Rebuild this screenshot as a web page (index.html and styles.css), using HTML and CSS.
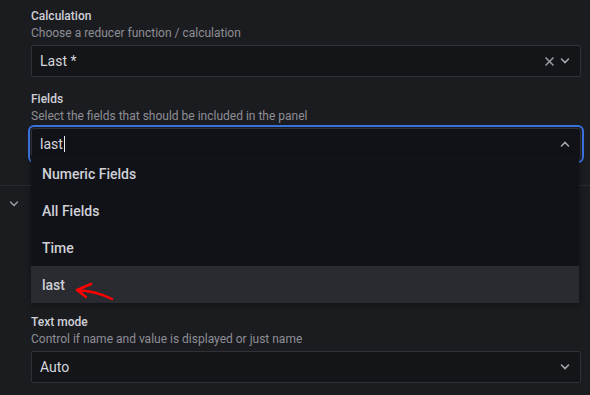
FILE: index.html
```html
<!DOCTYPE html>
<html>
<head>
<link rel="stylesheet" href="styles.css">
</head>
<body>

<div class="group">
    <div class="field">
        <div class="label">Calculation</div>
        <div class="desc">Choose a reducer function / calculation</div>
        <div class="select">
            <span class="value">Last *</span>
            <span class="icons">
                <svg width="11" height="11" viewBox="0 0 11 11"><path d="M1.5 1.5 L9.5 9.5 M9.5 1.5 L1.5 9.5" stroke="#9c9da4" stroke-width="1.5" fill="none"/></svg>
                <svg width="10" height="6" viewBox="0 0 10 6"><path d="M1.5 1 L5 4.5 L8.5 1" stroke="#a4a5ab" stroke-width="1.6" fill="none" stroke-linecap="round"/></svg>
            </span>
        </div>
    </div>

    <div class="field">
        <div class="label">Fields</div>
        <div class="desc">Select the fields that should be included in the panel</div>
        <div class="select-wrap">
            <div class="select focused">
                <span class="value">last<span class="caret"></span></span>
                <span class="icons">
                    <svg width="10" height="6" viewBox="0 0 10 6"><path d="M1.5 5 L5 1.5 L8.5 5" stroke="#a4a5ab" stroke-width="1.6" fill="none" stroke-linecap="round"/></svg>
                </span>
            </div>
            <div class="menu">
                <div class="item">Numeric Fields</div>
                <div class="item">All Fields</div>
                <div class="item">Time</div>
                <div class="item active">last
                    <svg class="arrow" width="50" height="24" viewBox="0 0 50 24"><path d="M17 4 L3 10 L12 17 M3 10 Q22 11 38 19" stroke="#f00" stroke-width="2.5" fill="none" stroke-linecap="round" stroke-linejoin="round"/></svg>
                </div>
            </div>
        </div>
    </div>
</div>

<div class="section">
    <div class="section-head">
        <svg width="10" height="6" viewBox="0 0 10 6"><path d="M1.5 1 L5 4.5 L8.5 1" stroke="#9c9da3" stroke-width="1.4" fill="none" stroke-linecap="round"/></svg>
    </div>
    <div class="group">
        <!-- options under the open menu -->
        <div class="hidden-field"></div>
        <div class="field">
            <div class="label">Text mode</div>
            <div class="desc">Control if name and value is displayed or just name</div>
            <div class="select">
                <span class="value">Auto</span>
                <span class="icons">
                    <svg width="10" height="6" viewBox="0 0 10 6"><path d="M1.5 1 L5 4.5 L8.5 1" stroke="#a4a5ab" stroke-width="1.6" fill="none" stroke-linecap="round"/></svg>
                </span>
            </div>
        </div>
    </div>
</div>

</body>
</html>
```

FILE: styles.css
```css
body {
    margin: 0;
    padding: 0;
    background: #1b1c20;
    font-family: Roboto, "Liberation Sans", sans-serif;
    color: #ccccdc;
    width: 590px;
    height: 395px;
    overflow: hidden;
}
.group {
    padding: 8px 9px 0 31px;
    display: flex;
    flex-direction: column;
    gap: 14px;
}
.label {
    font-size: 12px;
    line-height: 16px;
    font-weight: 500;
    color: #d0d0d8;
}
.desc {
    font-size: 12px;
    line-height: 16px;
    margin-top: 1px;
    color: #8e8e96;
}
.select {
    margin-top: 4px;
    height: 32px;
    box-sizing: border-box;
    border: 1px solid #303136;
    border-radius: 2px;
    background: #141518;
    display: flex;
    align-items: center;
    justify-content: space-between;
    padding: 0 10px 0 8px;
}
.select .value {
    font-size: 14px;
    color: #d6d6de;
    display: flex;
    align-items: center;
}
.icons {
    display: flex;
    align-items: center;
    gap: 5px;
}
.select-wrap {
    position: relative;
}
.select.focused {
    background: #111217;
    box-shadow: 0 0 0 1px #1b1c20, 0 0 0 3px #3871dc;
    border-radius: 3px;
}
.caret {
    display: inline-block;
    width: 1px;
    height: 16px;
    margin-left: 1px;
    background: #e8e8ee;
}
.menu {
    position: absolute;
    left: 0;
    top: 27px;
    width: 548px;
    background: #111217;
    z-index: 2;
    box-shadow: 0 2px 6px rgba(0, 0, 0, 0.35);
}
.item {
    height: 37px;
    display: flex;
    align-items: center;
    padding: 0 11px;
    font-size: 14px;
    font-weight: 500;
    color: #cfd0d8;
    position: relative;
}
.item.active {
    background: #2a2b31;
}
.arrow {
    position: absolute;
    left: 43px;
    top: 14px;
}
.section {
    margin-top: 25px;
    border-top: 1px solid #2a2b30;
}
.section-head {
    height: 36px;
    display: flex;
    align-items: center;
    padding-left: 9px;
}
.section .group {
    padding-top: 8px;
}
.hidden-field {
    height: 70px;
}
```
